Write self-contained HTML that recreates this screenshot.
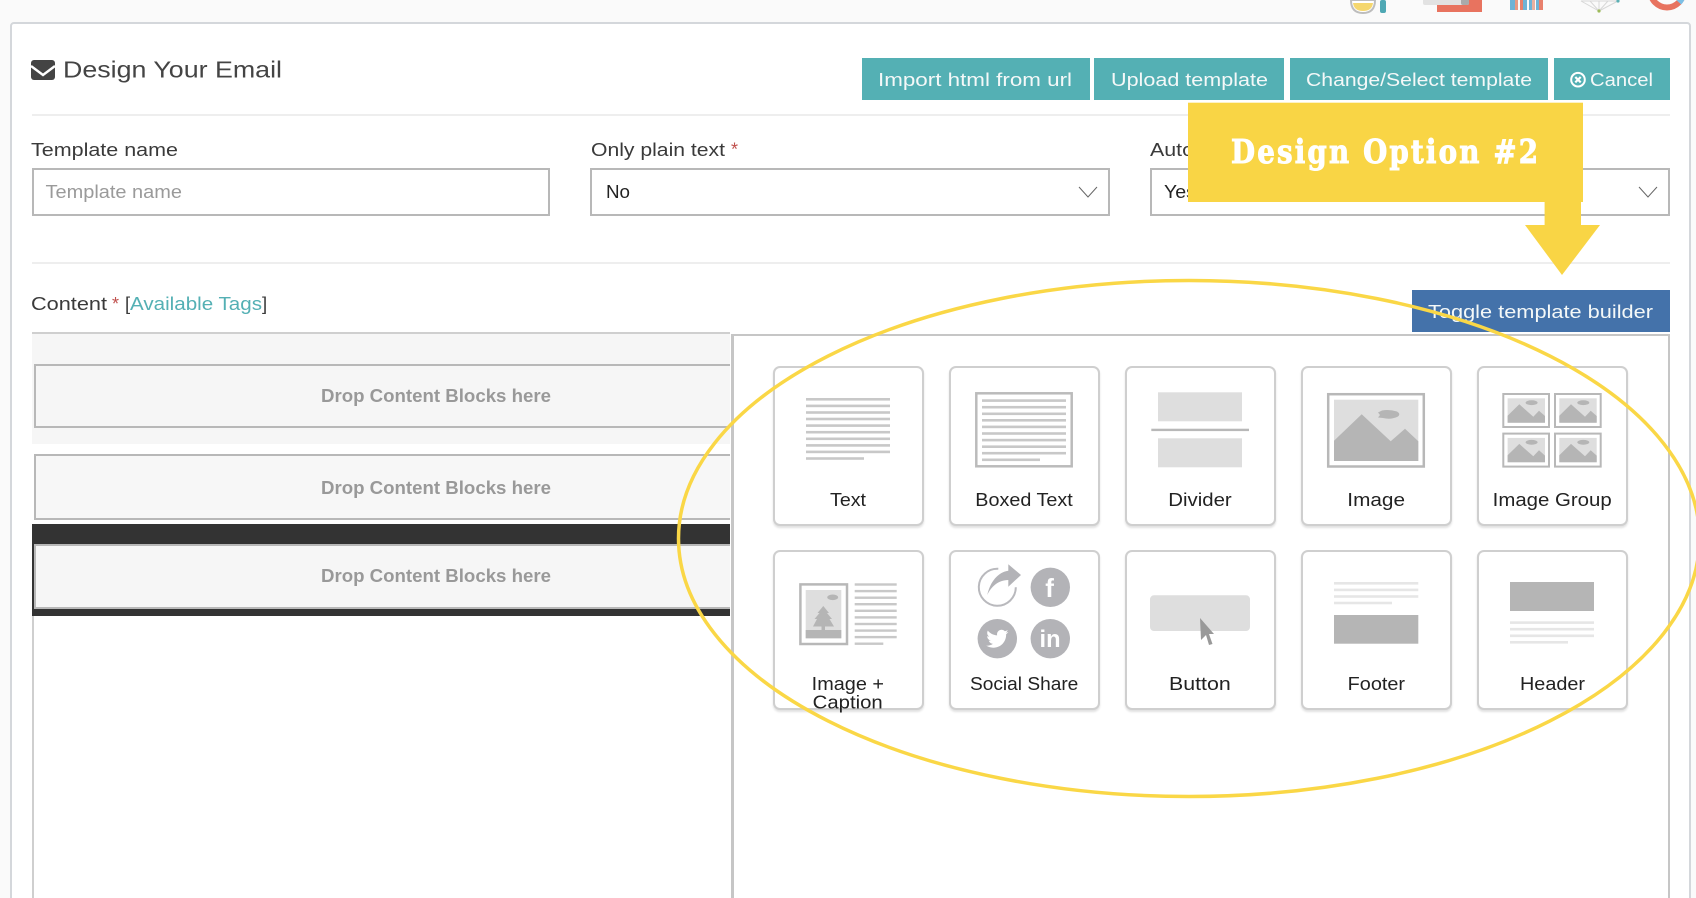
<!DOCTYPE html>
<html lang="en">
<head>
<meta charset="utf-8">
<title>Design Your Email</title>
<style>
html,body{margin:0;padding:0;width:1696px;height:898px;overflow:hidden;background:#fafafa;font-family:"Liberation Sans",sans-serif}
#wrap{position:absolute;left:0;top:0;width:1696px;height:898px;overflow:hidden;background:#fafafa}
.a{position:absolute;box-sizing:border-box}
#panel{left:10px;top:22px;width:1681px;height:900px;background:#fff;border:2px solid #d4d7db;border-radius:4px}
.btn{background:#54b0b4;top:58px;height:42px}
.hr{left:32px;width:1638px;height:2px;background:#eeeeee}
.inp{top:168px;height:48px;border:2px solid #b8b8b8;background:#fff}
.drop{left:34px;width:696px;background:#f6f6f6;border:2px solid #b8b8b8;border-right:0}
.card{width:151px;height:160px;background:#fff;border:2px solid #cfcfcf;border-radius:7px;box-shadow:0 2px 2px rgba(0,0,0,.12)}
svg{position:absolute;left:0;top:0}
text{font-family:"Liberation Sans",sans-serif}
.t{font-size:18.5px;fill:#3a3a3a}
.w{font-size:18.5px;fill:#f4f8f8}
.c{font-size:18px;fill:#222}
.d{font-size:18px;font-weight:bold;fill:#999}
.r{font-size:18px;fill:#c0504d}
.g{fill:#c8c8c8}
</style>
</head>
<body>
<div id="wrap">
<svg width="1696" height="30" viewBox="0 0 1696 30">
  <path d="M1351 0q0 13 12 13t12-13z" fill="#fff" stroke="#bdbdbd" stroke-width="2"/>
  <path d="M1353 3h20q-1 8-10 8t-10-8z" fill="#f5d76e"/>
  <rect x="1380" y="0" width="6" height="13" rx="2" fill="#4fa8b4"/>
  <rect x="1437" y="0" width="45" height="12" fill="#e8735f"/>
  <rect x="1423" y="-3" width="46" height="8" rx="2" fill="#e2e2e2"/>
  <rect x="1461" y="-3" width="8" height="8" rx="2" fill="#aaa"/>
  <g>
    <rect x="1510" y="0" width="5" height="10" fill="#6fb3d6"/><rect x="1515" y="0" width="3" height="10" fill="#e89a84"/>
    <rect x="1520" y="0" width="3" height="10" fill="#e8806c"/><rect x="1523" y="0" width="4" height="10" fill="#6fb3d6"/>
    <rect x="1529" y="0" width="3" height="10" fill="#6fb3d6"/><rect x="1532" y="0" width="3" height="10" fill="#e8b0a0"/>
    <rect x="1536" y="0" width="3" height="10" fill="#6fb3d6"/><rect x="1539" y="0" width="4" height="10" fill="#e8806c"/>
  </g>
  <g fill="none" stroke="#d8d8d8" stroke-width="1">
    <path d="M1581 1L1599 11L1618 1M1590 1L1599 11L1608 1M1599 1V11M1581 1H1618"/>
  </g>
  <circle cx="1599" cy="11" r="1.6" fill="#9dbb5a"/><circle cx="1618" cy="1" r="1.6" fill="#5bb0b4"/>
  <circle cx="1667" cy="-9" r="16.5" fill="none" stroke="#e8735f" stroke-width="6"/>
  <path d="M1679 2.5A16.5 16.5 0 0 0 1683 -5" fill="none" stroke="#7cc0e6" stroke-width="6"/>
</svg>

<div class="a" id="panel"></div>

<div class="a btn" style="left:862px;width:228px"></div>
<div class="a btn" style="left:1094px;width:190px"></div>
<div class="a btn" style="left:1290px;width:258px"></div>
<div class="a btn" style="left:1554px;width:116px"></div>
<div class="a hr" style="top:114px"></div>
<div class="a hr" style="top:262px"></div>

<div class="a inp" style="left:32px;width:518px"></div>
<div class="a inp" style="left:590px;width:520px"></div>
<div class="a inp" style="left:1150px;width:520px"></div>

<div class="a" style="left:1412px;top:290px;width:258px;height:42px;background:#4472aa"></div>

<div class="a" style="left:32px;top:332px;width:698px;height:2px;background:#cfcfcf"></div>
<div class="a" style="left:32px;top:334px;width:698px;height:110px;background:#f6f6f6"></div>
<div class="a drop" style="top:364px;height:64px"></div>
<div class="a drop" style="top:454px;height:66px;background:#f7f7f7"></div>
<div class="a" style="left:32px;top:524px;width:698px;height:92px;background:#333"></div>
<div class="a drop" style="top:544px;height:65px"></div>
<div class="a" style="left:32px;top:616px;width:2px;height:282px;background:#cfcfcf"></div>

<div class="a" style="left:731px;top:334px;width:939px;height:600px;background:#fff;border:2px solid #c6c6c6;border-left-width:3px"></div>

<div class="a card" style="left:772.5px;top:366px"></div>
<div class="a card" style="left:948.5px;top:366px"></div>
<div class="a card" style="left:1124.5px;top:366px"></div>
<div class="a card" style="left:1300.5px;top:366px"></div>
<div class="a card" style="left:1476.5px;top:366px"></div>
<div class="a card" style="left:772.5px;top:550px"></div>
<div class="a card" style="left:948.5px;top:550px"></div>
<div class="a card" style="left:1124.5px;top:550px"></div>
<div class="a card" style="left:1300.5px;top:550px"></div>
<div class="a card" style="left:1476.5px;top:550px"></div>

<svg width="1696" height="898" viewBox="0 0 1696 898">
  <defs>
    <g id="pic">
      <rect x="1.2" y="1.2" width="95.6" height="72.3" fill="#fff" stroke="#b8b8b8" stroke-width="2.5"/>
      <rect x="7" y="6.7" width="84.3" height="61.3" fill="#dedede"/>
      <path d="M7 47.7L34.7 21.3L63.7 48.3L78 35.7L91.3 48.3V68H7z" fill="#b5b5b5"/>
      <path d="M51 19.5L55 17.5Q62 16 70 18.5Q74 21 71 23.5Q64 27 56 25L51 24.5L53 22z" fill="#b5b5b5"/>
    </g>
    <g id="mini">
      <rect x="1" y="1" width="45.7" height="33" fill="#fff" stroke="#b8b8b8" stroke-width="2"/>
      <rect x="5.3" y="5.3" width="37.4" height="24.4" fill="#dedede"/>
      <path d="M5.3 22.7L17 11.3L31 23.7L36.7 17.7L42.7 23V29.7H5.3z" fill="#b5b5b5"/>
      <ellipse cx="29.3" cy="9.7" rx="6" ry="2.4" fill="#b5b5b5"/>
    </g>
  </defs>

  <!-- heading -->
  <rect x="31" y="60" width="24" height="20" rx="3" fill="#444"/>
  <path d="M31 66L43 75L55 66" fill="none" stroke="#fff" stroke-width="2.4"/>
  <text x="63" y="77.5" font-size="23" fill="#444" textLength="219" lengthAdjust="spacingAndGlyphs">Design Your Email</text>

  <!-- buttons -->
  <text class="w" x="878" y="86" textLength="194" lengthAdjust="spacingAndGlyphs">Import html from url</text>
  <text class="w" x="1111" y="86" textLength="157" lengthAdjust="spacingAndGlyphs">Upload template</text>
  <text class="w" x="1306" y="86" textLength="226" lengthAdjust="spacingAndGlyphs">Change/Select template</text>
  <circle cx="1578" cy="79.7" r="6.8" fill="none" stroke="#fff" stroke-width="2"/>
  <path d="M1575.3 77L1580.7 82.4M1580.7 77L1575.3 82.4" stroke="#fff" stroke-width="2.2"/>
  <text class="w" x="1590" y="86" textLength="63" lengthAdjust="spacingAndGlyphs">Cancel</text>

  <!-- labels -->
  <text class="t" x="31" y="156" textLength="147" lengthAdjust="spacingAndGlyphs">Template name</text>
  <text class="t" x="591" y="156" textLength="134" lengthAdjust="spacingAndGlyphs">Only plain text</text>
  <text class="r" x="731" y="155.5">*</text>
  <text class="t" x="1150" y="156" textLength="44" lengthAdjust="spacingAndGlyphs">Auto</text>

  <text x="45.5" y="198" font-size="18" fill="#9a9a9a" textLength="136.5" lengthAdjust="spacingAndGlyphs">Template name</text>
  <text x="606" y="198" font-size="18" fill="#222" textLength="24" lengthAdjust="spacingAndGlyphs">No</text>
  <text x="1164" y="198" font-size="18" fill="#222" textLength="32" lengthAdjust="spacingAndGlyphs">Yes</text>
  <path d="M1079 187L1088 197L1097 187M1639 187L1648 197L1657 187" fill="none" stroke="#666" stroke-width="1"/>

  <text class="t" x="31" y="310" textLength="76" lengthAdjust="spacingAndGlyphs">Content</text>
  <text class="r" x="112" y="310">*</text>
  <text class="t" x="125" y="310">[</text>
  <text x="130" y="310" font-size="18.5" fill="#54b0b4" textLength="132" lengthAdjust="spacingAndGlyphs">Available Tags</text>
  <text class="t" x="262" y="310">]</text>

  <text class="w" x="1428" y="318" textLength="225" lengthAdjust="spacingAndGlyphs">Toggle template builder</text>

  <!-- drop zones -->
  <text class="d" x="321" y="402" textLength="230" lengthAdjust="spacingAndGlyphs">Drop Content Blocks here</text>
  <text class="d" x="321" y="494" textLength="230" lengthAdjust="spacingAndGlyphs">Drop Content Blocks here</text>
  <text class="d" x="321" y="582" textLength="230" lengthAdjust="spacingAndGlyphs">Drop Content Blocks here</text>

  <!-- Text icon -->
  <g class="g">
    <rect x="806" y="398" width="84" height="2.6"/><rect x="806" y="404.6" width="84" height="2.6"/>
    <rect x="806" y="411.2" width="84" height="2.6"/><rect x="806" y="417.7" width="84" height="2.6"/>
    <rect x="806" y="424.3" width="84" height="2.6"/><rect x="806" y="430.9" width="84" height="2.6"/>
    <rect x="806" y="437.5" width="84" height="2.6"/><rect x="806" y="444.1" width="84" height="2.6"/>
    <rect x="806" y="450.6" width="84" height="2.6"/><rect x="806" y="457.2" width="58" height="2.6"/>
  </g>
  <text class="c" x="830" y="506" textLength="36" lengthAdjust="spacingAndGlyphs">Text</text>

  <!-- Boxed text -->
  <rect x="976.3" y="393.3" width="95.4" height="73" fill="none" stroke="#bbb" stroke-width="2.5"/>
  <g class="g">
    <rect x="982" y="399.3" width="84" height="2.6"/><rect x="982" y="405.9" width="84" height="2.6"/>
    <rect x="982" y="412.5" width="84" height="2.6"/><rect x="982" y="419" width="84" height="2.6"/>
    <rect x="982" y="425.6" width="84" height="2.6"/><rect x="982" y="432.2" width="84" height="2.6"/>
    <rect x="982" y="438.8" width="84" height="2.6"/><rect x="982" y="445.4" width="84" height="2.6"/>
    <rect x="982" y="451.9" width="84" height="2.6"/><rect x="982" y="458.5" width="58" height="2.6"/>
  </g>
  <text class="c" x="975.3" y="506" textLength="97.4" lengthAdjust="spacingAndGlyphs">Boxed Text</text>

  <!-- Divider -->
  <rect x="1158" y="392.3" width="84" height="29" fill="#dedede"/>
  <rect x="1158" y="438.3" width="84" height="29" fill="#dedede"/>
  <rect x="1151.3" y="428.7" width="97.7" height="2.4" fill="#b8b8b8"/>
  <text class="c" x="1168.3" y="506" textLength="63.4" lengthAdjust="spacingAndGlyphs">Divider</text>

  <!-- Image -->
  <use href="#pic" transform="translate(1327,393)"/>
  <text class="c" x="1347.3" y="506" textLength="57.7" lengthAdjust="spacingAndGlyphs">Image</text>

  <!-- Image group -->
  <use href="#mini" transform="translate(1502.3,393)"/>
  <use href="#mini" transform="translate(1554,393)"/>
  <use href="#mini" transform="translate(1502.3,432.6)"/>
  <use href="#mini" transform="translate(1554,432.6)"/>
  <text class="c" x="1492.7" y="506" textLength="119" lengthAdjust="spacingAndGlyphs">Image Group</text>

  <!-- Image + Caption -->
  <rect x="800.4" y="584.4" width="46.6" height="59.6" fill="#fff" stroke="#b8b8b8" stroke-width="2.5"/>
  <rect x="805.7" y="590" width="35.6" height="48.3" fill="#dedede"/>
  <rect x="805.7" y="630" width="35.6" height="8.3" fill="#b5b5b5"/>
  <path d="M823.3 606L829 613H827L832 619H829.5L834 626.5H825V630H821.5V626.5H813L817 619H814.5L819.5 613H817.5z" fill="#b5b5b5"/>
  <ellipse cx="832.7" cy="597.3" rx="5.5" ry="2.8" fill="#b5b5b5"/>
  <g class="g">
    <rect x="854.7" y="583.3" width="42" height="2.4"/><rect x="854.7" y="589.9" width="42" height="2.4"/>
    <rect x="854.7" y="596.5" width="42" height="2.4"/><rect x="854.7" y="603" width="42" height="2.4"/>
    <rect x="854.7" y="609.6" width="42" height="2.4"/><rect x="854.7" y="616.2" width="42" height="2.4"/>
    <rect x="854.7" y="622.8" width="42" height="2.4"/><rect x="854.7" y="629.4" width="42" height="2.4"/>
    <rect x="854.7" y="635.9" width="42" height="2.4"/><rect x="854.7" y="642.5" width="28.6" height="2.4"/>
  </g>
  <text class="c" x="811.7" y="690" textLength="72.3" lengthAdjust="spacingAndGlyphs">Image +</text>
  <text class="c" x="812.7" y="708.3" textLength="70" lengthAdjust="spacingAndGlyphs">Caption</text>

  <!-- Social share -->
  <path d="M998.3 568.8A18.5 18.5 0 1 0 1015.8 587.3" fill="none" stroke="#b9b9bd" stroke-width="2"/>
  <path d="M1021 575L1008.3 564.3V570.7C998 572 990 582 987.3 595C991 587 998 580 1008.3 580V586.7z" fill="#b3b3b7"/>
  <circle cx="1050.3" cy="587.3" r="19.7" fill="#b3b3b7"/>
  <circle cx="997.3" cy="638.7" r="19.7" fill="#b3b3b7"/>
  <circle cx="1050.3" cy="638.7" r="19.7" fill="#b3b3b7"/>
  <text x="1045.3" y="597" font-size="26" font-weight="bold" fill="#fff">f</text>
  <path transform="translate(986.3,627.7) scale(.92)" fill="#fff" d="M23.954 4.569c-.885.389-1.83.654-2.825.775 1.014-.611 1.794-1.574 2.163-2.723-.951.555-2.005.959-3.127 1.184-.896-.959-2.173-1.559-3.591-1.559-2.717 0-4.92 2.203-4.92 4.917 0 .39.045.765.127 1.124C7.691 8.094 4.066 6.13 1.64 3.161c-.427.722-.666 1.561-.666 2.475 0 1.71.87 3.213 2.188 4.096-.807-.026-1.566-.248-2.228-.616v.061c0 2.385 1.693 4.374 3.946 4.827-.413.111-.849.171-1.296.171-.314 0-.615-.03-.916-.086.631 1.953 2.445 3.377 4.604 3.417-1.68 1.319-3.809 2.105-6.102 2.105-.39 0-.779-.023-1.17-.067 2.189 1.394 4.768 2.209 7.557 2.209 9.054 0 13.999-7.496 13.999-13.986 0-.209 0-.42-.015-.63.961-.689 1.8-1.56 2.46-2.548l-.047-.02z"/>
  <text x="1039.5" y="647" font-size="24" font-weight="bold" fill="#fff" textLength="21" lengthAdjust="spacingAndGlyphs">in</text>
  <text class="c" x="970" y="690" textLength="108.3" lengthAdjust="spacingAndGlyphs">Social Share</text>

  <!-- Button -->
  <rect x="1150" y="595.3" width="100" height="35.7" rx="4" fill="#dedede"/>
  <path d="M1200 618L1201 640L1206 635L1209 645L1212.5 644L1209 634L1214 634z" fill="#999"/>
  <text class="c" x="1169" y="690" textLength="61.7" lengthAdjust="spacingAndGlyphs">Button</text>

  <!-- Footer -->
  <g fill="#e6e6e6">
    <rect x="1334" y="582" width="84.3" height="2.6"/><rect x="1334" y="588.6" width="84.3" height="2.6"/>
    <rect x="1334" y="595.2" width="84.3" height="2.6"/><rect x="1334" y="601.7" width="58" height="2.6"/>
  </g>
  <rect x="1334" y="615" width="84.3" height="28.7" fill="#b5b5b5"/>
  <text class="c" x="1347.7" y="690" textLength="57.3" lengthAdjust="spacingAndGlyphs">Footer</text>

  <!-- Header -->
  <rect x="1510" y="582" width="84" height="29" fill="#b5b5b5"/>
  <g fill="#e6e6e6">
    <rect x="1510" y="621.3" width="84" height="2.6"/><rect x="1510" y="627.9" width="84" height="2.6"/>
    <rect x="1510" y="634.5" width="84" height="2.6"/><rect x="1510" y="641" width="58" height="2.6"/>
  </g>
  <text class="c" x="1520" y="690" textLength="65" lengthAdjust="spacingAndGlyphs">Header</text>

  <!-- annotation -->
  <ellipse cx="1189" cy="538.5" rx="510.5" ry="258" fill="none" stroke="#fad746" stroke-width="3.5"/>
  <rect x="1188" y="102.7" width="395" height="99.3" fill="#f9d545"/>
  <rect x="1544.6" y="202" width="36.4" height="24" fill="#f9d545"/>
  <path d="M1525 225H1600L1562 275z" fill="#f9d545"/>
  <text transform="translate(1231,163) scale(.84,1)" x="0" y="0" style="font-family:'DejaVu Serif',serif" font-size="33" font-weight="bold" fill="#fff" stroke="#fff" stroke-width="1" textLength="365.5" lengthAdjust="spacing">Design Option #2</text>
</svg>
</div>
</body>
</html>
